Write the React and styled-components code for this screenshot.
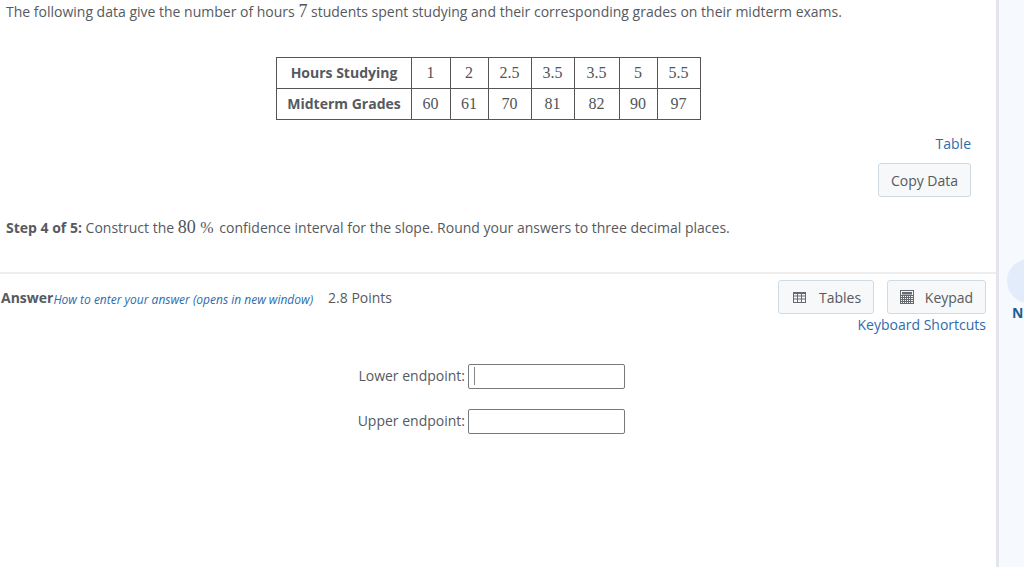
import React from "react";
import styled, { createGlobalStyle } from "styled-components";

const GlobalStyle = createGlobalStyle`
  html, body {
    margin: 0;
    padding: 0;
    height: 567px;
    overflow: hidden;
    background: white;
    font-family: "Open Sans", "Liberation Sans", sans-serif;
    font-size: 14px;
    color: #555a60;
  }
`;

const Page = styled.div`
  display: flex;
  width: 1024px;
  height: 567px;
  overflow: hidden;
`;

const Main = styled.main`
  width: 996px;
  flex: none;
`;

const Side = styled.aside`
  position: relative;
  flex: 1;
  background: #f6f9fe;
  border-left: 3px solid #e3e5ea;
  overflow: hidden;
`;

const Bubble = styled.div`
  position: absolute;
  left: 8px;
  top: 259px;
  width: 44px;
  height: 44px;
  border-radius: 50%;
  background: #e3ecfb;
`;

const NextLetter = styled.div`
  position: absolute;
  left: 13px;
  top: 303px;
  font-weight: 700;
  font-size: 14px;
  line-height: 19px;
  color: #1f5c99;
`;

const Question = styled.section`
  padding: 1px 6px 0;
  height: 274px;
  box-sizing: border-box;
  border-bottom: 2px solid #eeeeee;
`;

const Para = styled.p`
  margin: 0;
  line-height: 20px;
  white-space: nowrap;
`;

const MathNum = styled.span`
  font-family: "Liberation Serif", serif;
  font-size: 18px;
  color: #50555a;
`;

const MathSign = styled.span`
  font-size: 16px;
  margin-right: -1.5px;
`;

const TableWrap = styled.div`
  display: flex;
  margin: 35px 0 0 270px;
`;

const DataTable = styled.table`
  border-collapse: collapse;
  border: 1px solid #555;

  th, td {
    border: 1px solid #555;
    box-sizing: border-box;
    height: 31px;
    text-align: center;
  }
  th {
    width: 135px;
    padding: 0 0 2px;
    font-weight: 700;
    font-size: 14px;
    color: #555a60;
  }
  td {
    padding: 0 1px 0 0;
    font-family: "Liberation Serif", serif;
    font-size: 16px;
    color: #50555a;
  }
`;

const Cell = styled.td`
  width: ${p => p.$w}px;
  min-width: ${p => p.$w}px;
`;

const TableTools = styled.div`
  display: flex;
  flex-direction: column;
  align-items: flex-end;
  margin: 14px 19px 0 0;
  gap: 9px;
`;

const LinkText = styled.a`
  color: #2c6cad;
  text-decoration: none;
  line-height: 20px;
`;

const Button = styled.button`
  display: flex;
  align-items: center;
  justify-content: center;
  gap: ${p => p.$gap || 0}px;
  box-sizing: border-box;
  width: ${p => p.$w}px;
  height: 34px;
  padding: 0 0 0 ${p => p.$indent || 0}px;
  background: #f6f8fa;
  border: 1px solid #cfdbe4;
  border-radius: 3px;
  font: inherit;
  color: #555a60;
`;

const Step = styled(Para)`
  margin-top: 18px;
  line-height: 24px;
`;

const AnswerBar = styled.div`
  display: flex;
  align-items: flex-start;
  justify-content: space-between;
  padding: 6px 10px 0 1px;
`;

const AnswerMeta = styled.div`
  display: flex;
  align-items: center;
  height: 34px;
  white-space: nowrap;
`;

const AnswerTitle = styled.strong`
  font-size: 14px;
  color: #555a60;
`;

const HelpLink = styled.a`
  color: #2c6cad;
  font-style: italic;
  font-size: 12px;
  margin-top: 4px;
  text-decoration: none;
`;

const Points = styled.span`
  margin-left: 15px;
  font-size: 14px;
`;

const Tools = styled.div`
  display: flex;
  flex-direction: column;
  align-items: flex-end;
`;

const ToolRow = styled.div`
  display: flex;
  gap: 13px;
`;

const ShortcutLink = styled(LinkText)`
  margin-top: 1px;
`;

const Fields = styled.form`
  display: flex;
  flex-direction: column;
  gap: 20px;
  width: 625px;
  margin-top: 29px;
`;

const Field = styled.label`
  display: flex;
  justify-content: flex-end;
  align-items: center;
  gap: 3px;
`;

const FieldLabel = styled.span`
  margin-top: -2px;
`;

const FieldBox = styled.span`
  position: relative;
  display: block;
  box-sizing: border-box;
  width: 157px;
  height: 25px;
  border: 1px solid #77797c;
  border-radius: 2px;
  background: white;
`;

const Caret = styled.span`
  position: absolute;
  left: 5px;
  top: 2px;
  width: 1px;
  height: 18px;
  background: #888;
`;

const TableIcon = () => (
  <svg width="13" height="11" viewBox="0 0 13 11" fill="none" stroke="#666a70" strokeWidth="1">
    <rect x="0.5" y="0.5" width="12" height="10" />
    <path d="M0.5 1.5H12.5M0.5 4H12.5M0.5 7H12.5M4.5 1.5V10.5M8.5 1.5V10.5" />
  </svg>
);

const KeypadIcon = () => (
  <svg width="14" height="14" viewBox="0 0 14 14" fill="none" stroke="#666a70" strokeWidth="1">
    <rect x="0.5" y="0.5" width="13" height="13" />
    <rect x="2.5" y="2.5" width="9" height="1.5" fill="#666a70" />
    <path d="M0.5 5.5H13.5M0.5 7.5H13.5M0.5 9.5H13.5M0.5 11.5H13.5M2.5 5.5V13.5M4.5 5.5V13.5M6.5 5.5V13.5M8.5 5.5V13.5M10.5 5.5V13.5" />
  </svg>
);

const widths = [39, 38, 43, 43, 45, 38, 43];
const hours = ["1", "2", "2.5", "3.5", "3.5", "5", "5.5"];
const grades = ["60", "61", "70", "81", "82", "90", "97"];

export default function App() {
  return (
    <Page>
      <GlobalStyle />
      <Main>
        <Question>
          <Para>
            The following data give the number of hours <MathNum>7</MathNum> students spent studying and their corresponding grades on their midterm exams.
          </Para>
          <TableWrap>
            <DataTable>
              <tbody>
                <tr>
                  <th>Hours Studying</th>
                  {hours.map((h, i) => <Cell key={i} $w={widths[i]}>{h}</Cell>)}
                </tr>
                <tr>
                  <th>Midterm Grades</th>
                  {grades.map((g, i) => <Cell key={i} $w={widths[i]}>{g}</Cell>)}
                </tr>
              </tbody>
            </DataTable>
          </TableWrap>
          <TableTools>
            <LinkText href="#">Table</LinkText>
            <Button $w={93}>Copy Data</Button>
          </TableTools>
          <Step>
            <strong>Step 4 of 5:</strong> Construct the <MathNum>80 <MathSign>%</MathSign></MathNum>&nbsp; confidence interval for the slope. Round your answers to three decimal places.
          </Step>
        </Question>
        <AnswerBar>
          <AnswerMeta>
            <AnswerTitle>Answer</AnswerTitle>
            <HelpLink href="#">How to enter your answer (opens in new window)</HelpLink>
            <Points>2.8 Points</Points>
          </AnswerMeta>
          <Tools>
            <ToolRow>
              <Button $w={96} $gap={13} $indent={2}><TableIcon />Tables</Button>
              <Button $w={99} $gap={11}><KeypadIcon />Keypad</Button>
            </ToolRow>
            <ShortcutLink href="#">Keyboard Shortcuts</ShortcutLink>
          </Tools>
        </AnswerBar>
        <Fields>
          <Field><FieldLabel>Lower endpoint:</FieldLabel><FieldBox><Caret /></FieldBox></Field>
          <Field><FieldLabel>Upper endpoint:</FieldLabel><FieldBox /></Field>
        </Fields>
      </Main>
      <Side>
        <Bubble />
        <NextLetter>N</NextLetter>
      </Side>
    </Page>
  );
}
